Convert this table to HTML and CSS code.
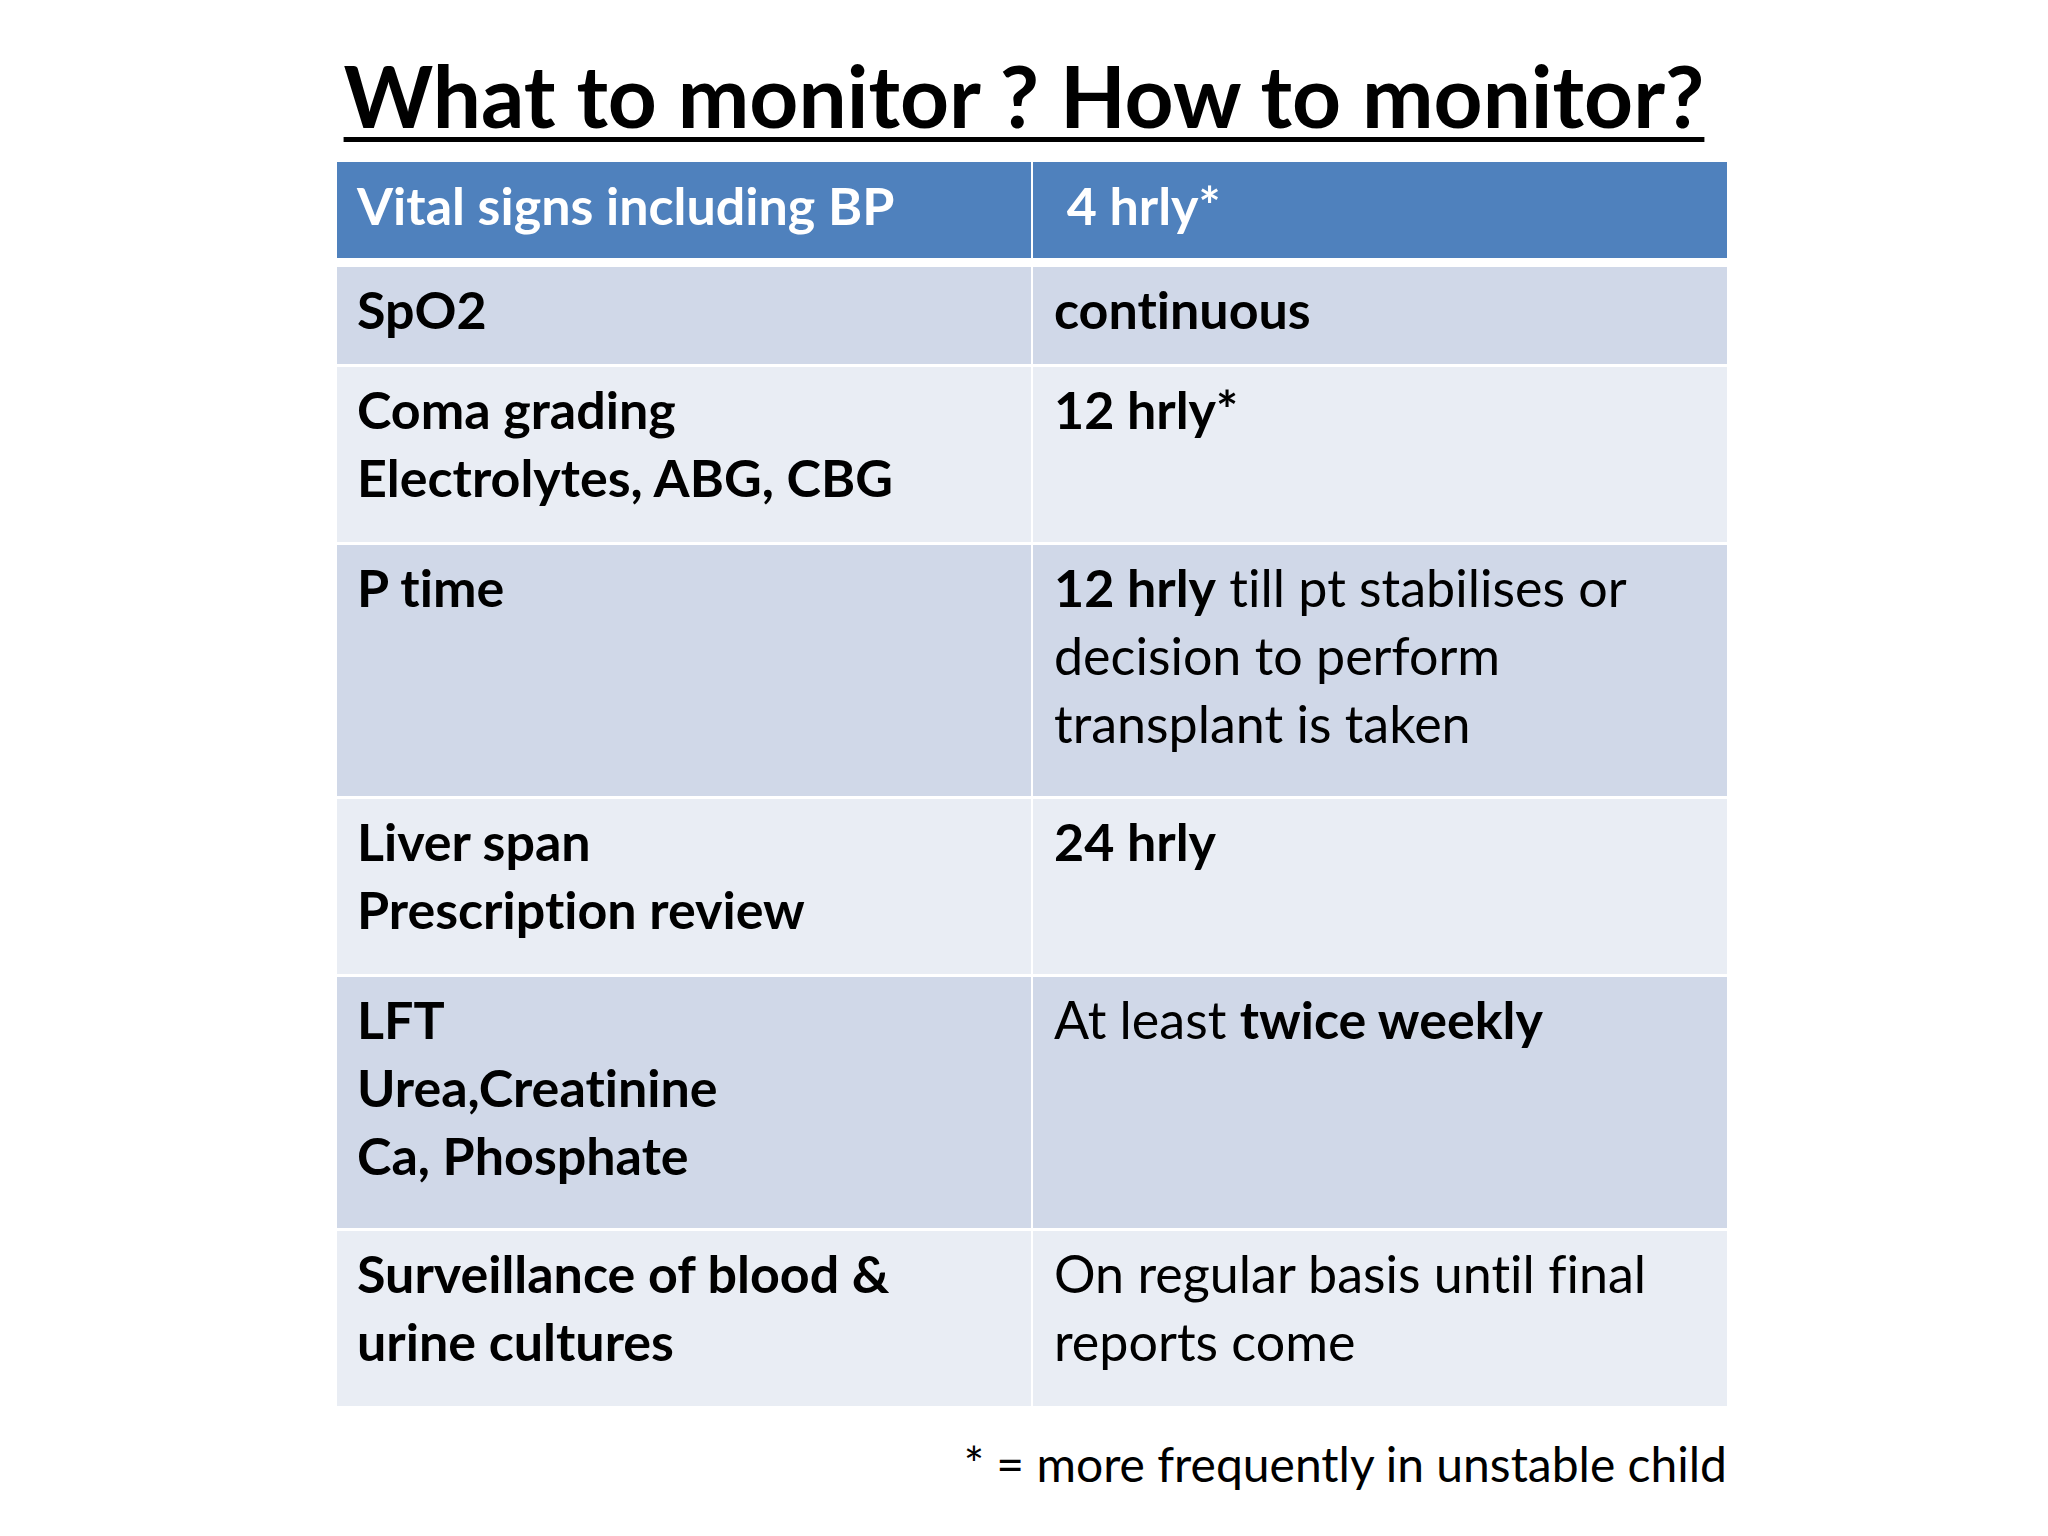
FILE: index.html
```html
<!DOCTYPE html>
<html lang="en">
<head>
<meta charset="utf-8">
<title>What to monitor ? How to monitor?</title>
<link rel="stylesheet" href="styles.css">
</head>
<body>
<div class="slide">
  <h1 class="title"><span class="title-text">What to monitor ? How to monitor?</span></h1>
  <div class="content">
    <div class="table">
      <div class="row head">
        <div class="cell">Vital signs including BP</div>
        <div class="cell">&nbsp;4 hrly*</div>
      </div>
      <div class="row odd l1">
        <div class="cell b">SpO2</div>
        <div class="cell b">continuous</div>
      </div>
      <div class="row even l2">
        <div class="cell b">Coma grading<br>Electrolytes, ABG, CBG</div>
        <div class="cell b">12 hrly*</div>
      </div>
      <div class="row odd l3">
        <div class="cell b">P time</div>
        <div class="cell"><b>12 hrly</b> till pt stabilises or<br>decision to perform<br>transplant is taken</div>
      </div>
      <div class="row even l2">
        <div class="cell b">Liver span<br>Prescription review</div>
        <div class="cell b">24 hrly</div>
      </div>
      <div class="row odd l3">
        <div class="cell b">LFT<br>Urea,Creatinine<br>Ca, Phosphate</div>
        <div class="cell">At least <b>twice weekly</b></div>
      </div>
      <div class="row even l2">
        <div class="cell b">Surveillance of blood &amp;<br>urine cultures</div>
        <div class="cell">On regular basis until final<br>reports come</div>
      </div>
    </div>
    <p class="note">* = more frequently in unstable child</p>
  </div>
</div>
</body>
</html>
```
FILE: styles.css
```css
html, body {
  margin: 0;
  padding: 0;
  background: #ffffff;
}

.slide {
  width: 2048px;
  height: 1536px;
  overflow: hidden;
  font-family: Lato, "Open Sans", "Liberation Sans", sans-serif;
  font-variant-ligatures: no-common-ligatures;
  color: #000000;
}

.title {
  margin: 45px 0 0 0;
  font-size: 85.5px;
  line-height: 100px;
  font-weight: 700;
  text-align: center;
}

.title-text {
  text-decoration: underline;
  text-decoration-thickness: 5px;
  text-underline-offset: 9px;
}

.content {
  margin: 17px 0 0 337px;
  width: 1390px;
}

.table {
  display: flex;
  flex-direction: column;
  gap: 3px;
}

.row {
  display: grid;
  grid-template-columns: 694px 694px;
  column-gap: 2px;
}

.cell {
  font-size: 52px;
  line-height: 68px;
  padding: 8px 20px 0 20px;
  box-sizing: border-box;
}

.cell + .cell {
  padding-left: 21px;
}

.b, .cell b {
  font-weight: 700;
}

.head {
  height: 96px;
  margin-bottom: 6px;
}

.head .cell {
  background: #4f81bd;
  color: #ffffff;
  font-weight: 700;
  padding-top: 9px;
}

.odd .cell {
  background: #d0d8e8;
}

.even .cell {
  background: #e9edf4;
}

.l1 { height: 97px; }
.l2 { height: 175px; }
.l3 { height: 251px; }

.note {
  margin: 30px 0 0 0;
  font-size: 48px;
  line-height: 56px;
  text-align: right;
}
```
